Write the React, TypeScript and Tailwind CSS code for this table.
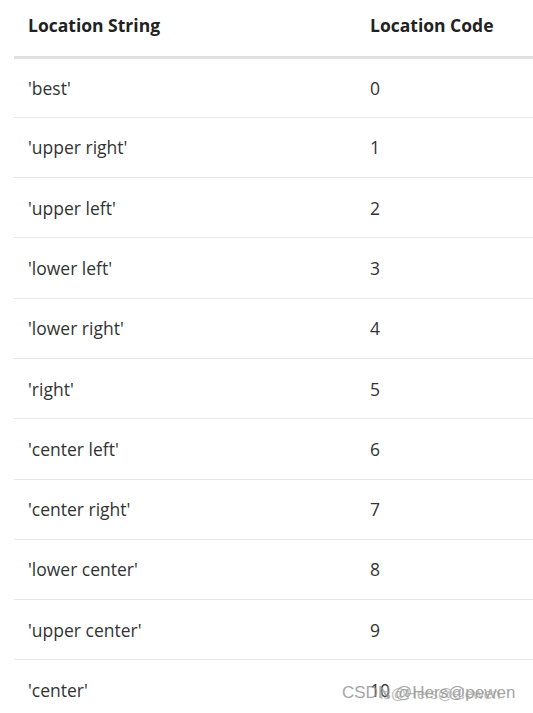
const rows: [string, number][] = [
  ["'best'", 0],
  ["'upper right'", 1],
  ["'upper left'", 2],
  ["'lower left'", 3],
  ["'lower right'", 4],
  ["'right'", 5],
  ["'center left'", 6],
  ["'center right'", 7],
  ["'lower center'", 8],
  ["'upper center'", 9],
  ["'center'", 10],
];

const App = () => {
  return (
    <div className="relative h-[713px] w-[533px] overflow-hidden bg-white pl-[14px] font-['Open_Sans',sans-serif]">
      <table className="w-[540px] border-collapse text-left">
        <thead>
          <tr className="h-[57px] border-b-[3px] border-[#dfe2e5]">
            <th className="w-[356px] pl-[14px] pb-[6px] text-[17.5px] font-bold text-[#222]">
              Location String
            </th>
            <th className="pb-[6px] text-[17.5px] font-bold text-[#222]">
              Location Code
            </th>
          </tr>
        </thead>
        <tbody>
          {rows.map(([name, code]) => (
            <tr key={code} className="h-[60.3px] border-b border-[#e6e8eb]">
              <td className="pl-[14px] text-[17.5px] text-[#333]">{name}</td>
              <td className="text-[17.5px] text-[#333]">{code}</td>
            </tr>
          ))}
        </tbody>
      </table>

      {/* watermark */}
      <div className="absolute left-[342px] top-[680px] whitespace-nowrap text-[17px] text-[#8f8f8f] font-['Liberation_Sans',sans-serif] opacity-80">
        CSDN @Hers@pewen
      </div>
      <div className="absolute left-[380px] top-[683px] whitespace-nowrap text-[15px] text-[#a0a0a0] font-['Liberation_Sans',sans-serif] opacity-70">
        ls@Hers@elewen
      </div>
    </div>
  );
};

export default App;
